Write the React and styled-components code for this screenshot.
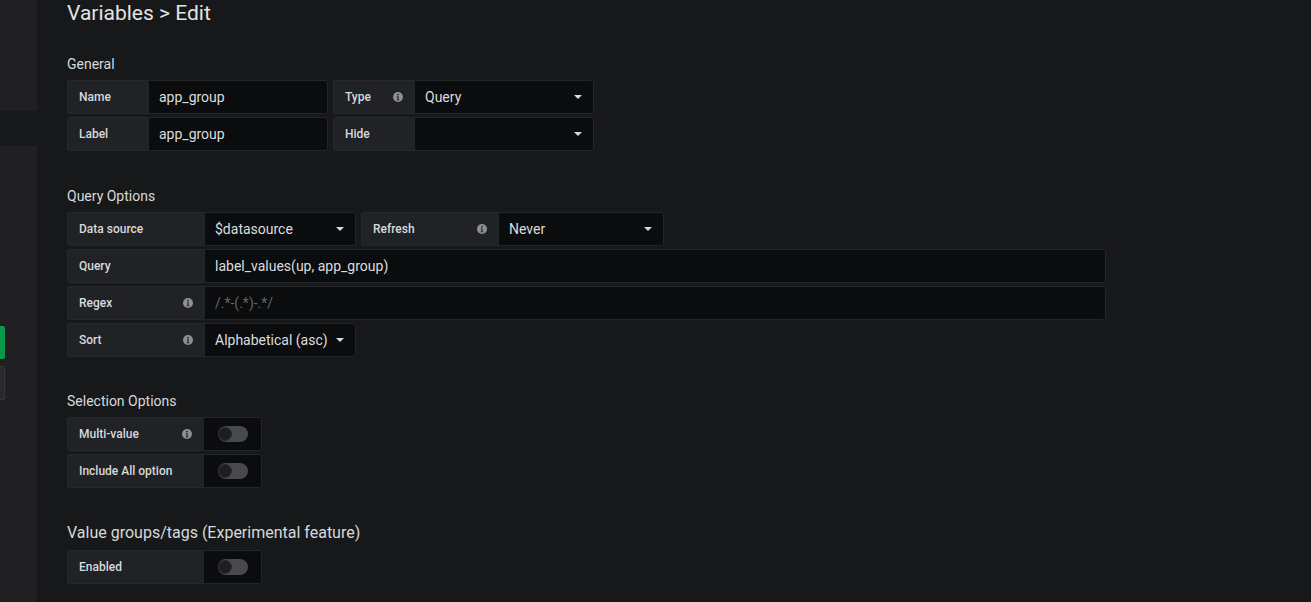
import React from "react";
import styled, { createGlobalStyle } from "styled-components";

const GlobalStyle = createGlobalStyle`
  html, body {
    margin: 0;
    padding: 0;
    background: #17181a;
    overflow: hidden;
  }
  body {
    font-family: Roboto, "Liberation Sans", Arial, sans-serif;
    color: #d8d9da;
  }
  * {
    box-sizing: border-box;
  }
`;

const Layout = styled.div`
  display: flex;
  height: 602px;
  background: #17181a;
`;

const Sidebar = styled.div`
  width: 37px;
  flex-shrink: 0;
  display: flex;
  flex-direction: column;
`;

const SidePanel = styled.div`
  background: #202023;
  height: ${({ h }) => (h ? `${h}px` : "auto")};
  flex: ${({ h }) => (h ? "none" : "1")};
  display: flex;
  flex-direction: column;
  align-items: flex-start;
  padding-top: ${({ pt }) => pt || 0}px;
`;

const SideGap = styled.div`
  height: 35px;
  background: #17181a;
`;

const ActiveBar = styled.div`
  width: 5px;
  height: 33px;
  background: #08994a;
  border-radius: 0 2px 2px 0;
`;

const SideTab = styled.div`
  width: 5px;
  height: 34px;
  margin-top: 7px;
  background: #29292c;
  border: 1px solid #38383b;
  border-left: none;
  border-radius: 0 2px 2px 0;
`;

const Main = styled.div`
  flex: 1;
  padding-left: 30px;
`;

const Title = styled.h1`
  margin: 0;
  font-size: 21px;
  line-height: 26px;
  font-weight: 400;
  color: #e3e3e4;
`;

const Section = styled.div`
  margin-top: ${({ mt }) => mt}px;
`;

const Heading = styled.div`
  font-size: ${({ big }) => (big ? 16 : 14)}px;
  line-height: ${({ big }) => (big ? 22 : 18)}px;
  color: #d8d9da;
  margin-bottom: ${({ big }) => (big ? 6 : 7)}px;
`;

const Rows = styled.div`
  display: flex;
  flex-direction: column;
  gap: 3px;
`;

const Row = styled.div`
  display: flex;
  gap: 5px;
`;

const Field = styled.div`
  display: flex;
  height: 34px;
`;

const Label = styled.div`
  width: ${({ w }) => w}px;
  display: flex;
  align-items: center;
  justify-content: space-between;
  padding: 0 11px 0 11px;
  background: #202226;
  border: 1px solid #27282b;
  border-right: none;
  border-radius: 3px 0 0 3px;
  font-size: 12px;
  font-weight: 500;
  color: #d8d9da;
`;

const Value = styled.div`
  width: ${({ w }) => w}px;
  display: flex;
  align-items: center;
  justify-content: space-between;
  padding: 0 10px;
  background: #0b0c0e;
  border: 1px solid #242527;
  border-radius: 0 3px 3px 0;
  font-size: 14px;
  color: ${({ muted }) => (muted ? "#636466" : "#dcdddf")};
`;

const Caret = styled.span`
  width: 0;
  height: 0;
  margin-right: 1px;
  border-left: 4px solid transparent;
  border-right: 4px solid transparent;
  border-top: 4px solid #d8d9da;
`;

const SwitchBox = styled.div`
  width: 59px;
  display: flex;
  align-items: center;
  padding-left: 14px;
  background: #0b0c0e;
  border: 1px solid #242527;
  border-radius: 0 3px 3px 0;
`;

const Track = styled.div`
  position: relative;
  width: 30px;
  height: 16px;
  border-radius: 8px;
  background: #48494b;
`;

const Knob = styled.div`
  position: absolute;
  top: 1px;
  left: 0;
  width: 14px;
  height: 14px;
  border-radius: 50%;
  background: #1d1e20;
  border: 1px solid #2c2d2f;
`;

const InfoIcon = () => (
  <svg width="10" height="10" viewBox="0 0 10 10">
    <circle cx="5" cy="5" r="5" fill="#8e8f91" />
    <circle cx="5" cy="2.6" r="0.9" fill="#202226" />
    <path d="M3.9 4.2h1.7v3.2h0.7v0.9H3.7v-0.9h0.7V5.1h-0.5z" fill="#202226" />
  </svg>
);

const Select = ({ w, children }) => (
  <Value w={w}>
    <span>{children}</span>
    <Caret />
  </Value>
);

const Toggle = () => (
  <SwitchBox>
    <Track>
      <Knob />
    </Track>
  </SwitchBox>
);

const FieldLabel = ({ w, info, children }) => (
  <Label w={w}>
    <span>{children}</span>
    {info && <InfoIcon />}
  </Label>
);

export default function App() {
  return (
    <Layout>
      <GlobalStyle />
      <Sidebar>
        <SidePanel h={111} />
        <SideGap />
        <SidePanel pt={180}>
          <ActiveBar />
          <SideTab />
        </SidePanel>
      </Sidebar>
      <Main>
        <Title>Variables &gt; Edit</Title>

        <Section mt={29}>
          <Heading>General</Heading>
          <Rows>
            <Row>
              <Field>
                <FieldLabel w={81}>Name</FieldLabel>
                <Value w={180}>app_group</Value>
              </Field>
              <Field>
                <FieldLabel w={81} info>Type</FieldLabel>
                <Select w={180}>Query</Select>
              </Field>
            </Row>
            <Row>
              <Field>
                <FieldLabel w={81}>Label</FieldLabel>
                <Value w={180}>app_group</Value>
              </Field>
              <Field>
                <FieldLabel w={81}>Hide</FieldLabel>
                <Select w={180} />
              </Field>
            </Row>
          </Rows>
        </Section>

        <Section mt={36}>
          <Heading>Query Options</Heading>
          <Rows>
            <Row>
              <Field>
                <FieldLabel w={137}>Data source</FieldLabel>
                <Select w={152}>$datasource</Select>
              </Field>
              <Field>
                <FieldLabel w={137} info>Refresh</FieldLabel>
                <Select w={166}>Never</Select>
              </Field>
            </Row>
            <Row>
              <Field>
                <FieldLabel w={137}>Query</FieldLabel>
                <Value w={902}>label_values(up, app_group)</Value>
              </Field>
            </Row>
            <Row>
              <Field>
                <FieldLabel w={137} info>Regex</FieldLabel>
                <Value w={902} muted>/.*-(.*)-.*/</Value>
              </Field>
            </Row>
            <Row>
              <Field>
                <FieldLabel w={137} info>Sort</FieldLabel>
                <Select w={152}>Alphabetical (asc)</Select>
              </Field>
            </Row>
          </Rows>
        </Section>

        <Section mt={35}>
          <Heading>Selection Options</Heading>
          <Rows>
            <Row>
              <Field>
                <FieldLabel w={136} info>Multi-value</FieldLabel>
                <Toggle />
              </Field>
            </Row>
            <Row>
              <Field>
                <FieldLabel w={136}>Include All option</FieldLabel>
                <Toggle />
              </Field>
            </Row>
          </Rows>
        </Section>

        <Section mt={34}>
          <Heading big>Value groups/tags (Experimental feature)</Heading>
          <Rows>
            <Row>
              <Field>
                <FieldLabel w={136}>Enabled</FieldLabel>
                <Toggle />
              </Field>
            </Row>
          </Rows>
        </Section>
      </Main>
    </Layout>
  );
}
